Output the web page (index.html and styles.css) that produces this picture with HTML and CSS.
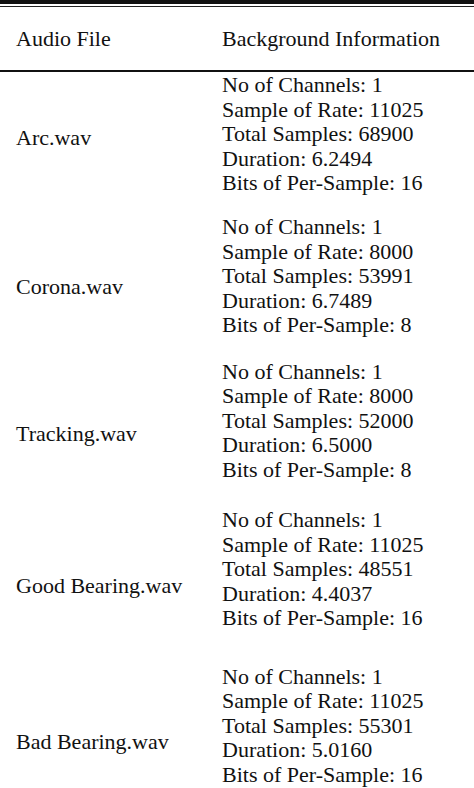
FILE: index.html
```html
<!DOCTYPE html>
<html>
<head>
<meta charset="utf-8">
<link rel="stylesheet" href="styles.css">
</head>
<body>
<div class="table">
  <div class="rule-top"></div>
  <div class="row head">
    <div class="file">Audio File</div>
    <div class="info">Background Information</div>
  </div>
  <div class="row r1">
    <div class="file">Arc.wav</div>
    <div class="info">
      <div>No of Channels: 1</div>
      <div>Sample of Rate: 11025</div>
      <div>Total Samples: 68900</div>
      <div>Duration: 6.2494</div>
      <div>Bits of Per-Sample: 16</div>
    </div>
  </div>
  <div class="row r2">
    <div class="file">Corona.wav</div>
    <div class="info">
      <div>No of Channels: 1</div>
      <div>Sample of Rate: 8000</div>
      <div>Total Samples: 53991</div>
      <div>Duration: 6.7489</div>
      <div>Bits of Per-Sample: 8</div>
    </div>
  </div>
  <div class="row r3">
    <div class="file">Tracking.wav</div>
    <div class="info">
      <div>No of Channels: 1</div>
      <div>Sample of Rate: 8000</div>
      <div>Total Samples: 52000</div>
      <div>Duration: 6.5000</div>
      <div>Bits of Per-Sample: 8</div>
    </div>
  </div>
  <div class="row r4">
    <div class="file">Good Bearing.wav</div>
    <div class="info">
      <div>No of Channels: 1</div>
      <div>Sample of Rate: 11025</div>
      <div>Total Samples: 48551</div>
      <div>Duration: 4.4037</div>
      <div>Bits of Per-Sample: 16</div>
    </div>
  </div>
  <div class="row r5">
    <div class="file">Bad Bearing.wav</div>
    <div class="info">
      <div>No of Channels: 1</div>
      <div>Sample of Rate: 11025</div>
      <div>Total Samples: 55301</div>
      <div>Duration: 5.0160</div>
      <div>Bits of Per-Sample: 16</div>
    </div>
  </div>
</div>
</body>
</html>
```

FILE: styles.css
```css
html, body {
  margin: 0;
  padding: 0;
  background: #fff;
}

body {
  font-family: "Liberation Serif", "Times New Roman", serif;
  font-size: 22px;
  line-height: 24.5px;
  color: #111;
  overflow: hidden;
}

.table {
  width: 474px;
}

.rule-top {
  border-top: 4px solid #111;
  height: 1.5px;
  border-bottom: 1.5px solid #222;
}

.row {
  display: grid;
  grid-template-columns: 222px 1fr;
  align-items: center;
}

.file {
  padding-left: 16px;
  white-space: nowrap;
}

.info {
  white-space: nowrap;
}

.head {
  padding-top: 20px;
  padding-bottom: 18.5px;
  border-bottom: 2px solid #111;
}

.r1 { padding-top: 1.5px; }
.r1 .info { padding-bottom: 8px; }
.r2 { margin-top: 11.5px; }
.r2 .info { padding-bottom: 22px; }
.r3 .info { padding-bottom: 26px; }
.r4 .info { padding-bottom: 34px; }
.r5 .info { padding-bottom: 32px; }
```
